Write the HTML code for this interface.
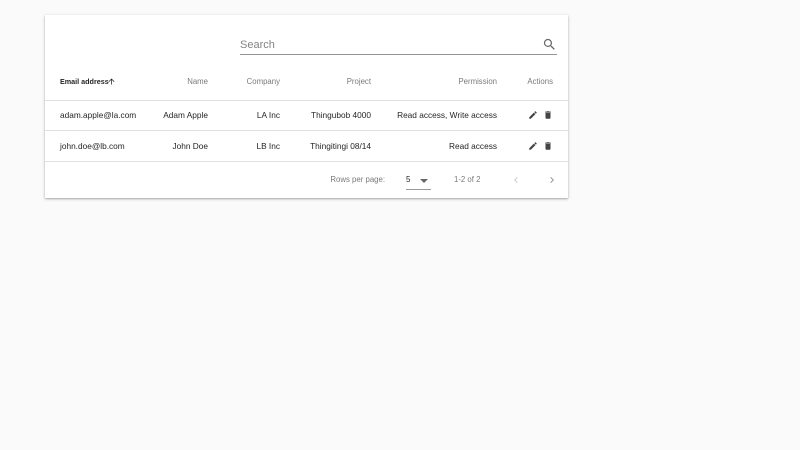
<!DOCTYPE html>
<html><head><style>
body{margin:0;background:#fafafa;font-family:"Liberation Sans",sans-serif;width:800px;height:450px;position:relative;overflow:hidden}
.card{position:absolute;left:45px;top:15px;width:523px;height:183px;background:#fff;box-shadow:0 1px 3px rgba(0,0,0,.25),0 1px 1px rgba(0,0,0,.12)}
.t{position:absolute;white-space:nowrap;font-size:8.3px;color:rgba(0,0,0,.87);line-height:10px}
.h{font-size:7.8px;color:rgba(0,0,0,.54)}
.r{text-align:right}
.line{position:absolute;left:0;width:523px;height:1px;background:#e0e0e0}
</style></head><body>
<div class="card">
 <div class="t" style="left:195px;top:24px;font-size:11px;color:rgba(0,0,0,.5);line-height:12px">Search</div>
 <div style="position:absolute;left:195px;top:39px;width:317px;height:1px;background:#949494"></div>
 <svg style="position:absolute;left:497px;top:22px" width="15" height="15" viewBox="0 0 24 24"><path fill="#666" d="M15.5 14h-.79l-.28-.27A6.47 6.47 0 0016 9.5 6.5 6.5 0 109.5 16c1.61 0 3.09-.59 4.23-1.57l.27.28v.79l5 4.99L20.49 19l-4.99-5zm-6 0C7.01 14 5 11.99 5 9.5S7.01 5 9.5 5 14 7.01 14 9.5 11.99 14 9.5 14z"/></svg>

 <div class="t h" style="left:15px;top:62px;color:rgba(0,0,0,.87);font-weight:bold;font-size:7.2px">Email address</div>
 <svg style="position:absolute;left:62px;top:62px" width="9" height="9" viewBox="0 0 24 24"><path fill="#222" d="M4 12l1.41 1.41L11 7.83V20h2V7.83l5.58 5.59L20 12l-8-8-8 8z"/></svg>
 <div class="t h r" style="right:360px;top:62px">Name</div>
 <div class="t h r" style="right:288px;top:62px">Company</div>
 <div class="t h r" style="right:197px;top:62px">Project</div>
 <div class="t h r" style="right:71px;top:62px">Permission</div>
 <div class="t h r" style="right:15px;top:62px">Actions</div>
 <div class="line" style="top:85px"></div>

 <div class="t" style="left:15px;top:95px">adam.apple@la.com</div>
 <div class="t r" style="right:360px;top:95px">Adam Apple</div>
 <div class="t r" style="right:288px;top:95px">LA Inc</div>
 <div class="t r" style="right:197px;top:95px">Thingubob 4000</div>
 <div class="t r" style="right:71px;top:95px">Read access, Write access</div>
 <div class="line" style="top:115px"></div>

 <div class="t" style="left:15px;top:126px">john.doe@lb.com</div>
 <div class="t r" style="right:360px;top:126px">John Doe</div>
 <div class="t r" style="right:288px;top:126px">LB Inc</div>
 <div class="t r" style="right:197px;top:126px">Thingitingi 08/14</div>
 <div class="t r" style="right:71px;top:126px">Read access</div>
 <div class="line" style="top:146px"></div>

 <svg style="position:absolute;left:483px;top:95px" width="10" height="10" viewBox="0 0 24 24"><path fill="#444" d="M3 17.25V21h3.75L17.81 9.94l-3.75-3.75L3 17.25zM20.71 7.04a1 1 0 000-1.41l-2.34-2.34a1 1 0 00-1.41 0l-1.83 1.83 3.75 3.75 1.83-1.83z"/></svg>
 <svg style="position:absolute;left:498px;top:95px" width="10" height="10" viewBox="0 0 24 24"><path fill="#444" d="M6 19c0 1.1.9 2 2 2h8c1.1 0 2-.9 2-2V7H6v12zM19 4h-3.5l-1-1h-5l-1 1H5v2h14V4z"/></svg>
 <svg style="position:absolute;left:483px;top:126px" width="10" height="10" viewBox="0 0 24 24"><path fill="#444" d="M3 17.25V21h3.75L17.81 9.94l-3.75-3.75L3 17.25zM20.71 7.04a1 1 0 000-1.41l-2.34-2.34a1 1 0 00-1.41 0l-1.83 1.83 3.75 3.75 1.83-1.83z"/></svg>
 <svg style="position:absolute;left:498px;top:126px" width="10" height="10" viewBox="0 0 24 24"><path fill="#444" d="M6 19c0 1.1.9 2 2 2h8c1.1 0 2-.9 2-2V7H6v12zM19 4h-3.5l-1-1h-5l-1 1H5v2h14V4z"/></svg>

 <div class="t h r" style="right:183px;top:160px">Rows per page:</div>
 <div class="t" style="left:361px;top:160px;font-size:8px">5</div>
 <div style="position:absolute;left:375px;top:164px;width:0;height:0;border-left:4px solid transparent;border-right:4px solid transparent;border-top:4px solid #666"></div>
 <div style="position:absolute;left:361px;top:174px;width:25px;height:1px;background:#999"></div>
 <div class="t h" style="left:409px;top:160px">1-2 of 2</div>
 <svg style="position:absolute;left:465px;top:159px" width="12" height="12" viewBox="0 0 24 24"><path fill="#ccc" d="M15.41 7.41L14 6l-6 6 6 6 1.41-1.41L10.83 12z"/></svg>
 <svg style="position:absolute;left:501px;top:159px" width="12" height="12" viewBox="0 0 24 24"><path fill="#999" d="M10 6L8.59 7.41 13.17 12l-4.58 4.59L10 18l6-6z"/></svg>
</div>
</body></html>
